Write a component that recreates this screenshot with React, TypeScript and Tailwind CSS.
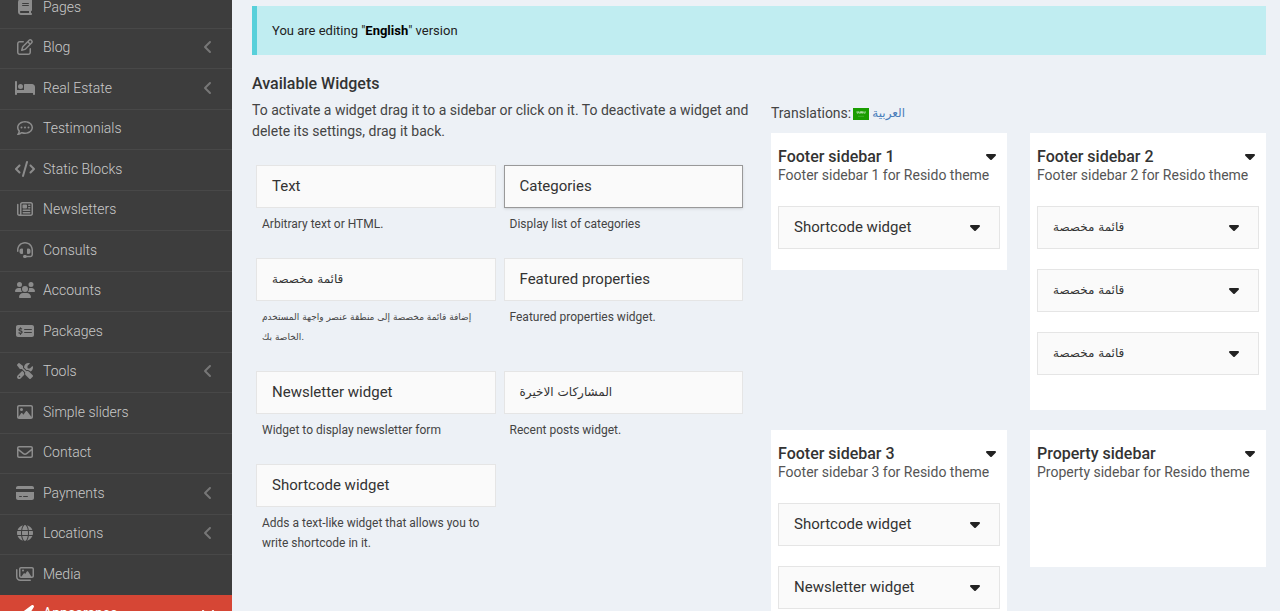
import type { IconType } from "react-icons";
import {
  FaAngleDown,
  FaAngleLeft,
  FaBed,
  FaBook,
  FaCaretDown,
  FaCode,
  FaCreditCard,
  FaGlobe,
  FaHeadset,
  FaMoneyCheckDollar,
  FaPaintbrush,
  FaRegCommentDots,
  FaRegEnvelope,
  FaRegImage,
  FaRegImages,
  FaRegNewspaper,
  FaRegPenToSquare,
  FaScrewdriverWrench,
  FaUsers,
} from "react-icons/fa6";

type NavEntry = { label: string; icon: IconType; expandable?: boolean; active?: boolean };

const navEntries: NavEntry[] = [
  { label: "Pages", icon: FaBook },
  { label: "Blog", icon: FaRegPenToSquare, expandable: true },
  { label: "Real Estate", icon: FaBed, expandable: true },
  { label: "Testimonials", icon: FaRegCommentDots },
  { label: "Static Blocks", icon: FaCode },
  { label: "Newsletters", icon: FaRegNewspaper },
  { label: "Consults", icon: FaHeadset },
  { label: "Accounts", icon: FaUsers },
  { label: "Packages", icon: FaMoneyCheckDollar },
  { label: "Tools", icon: FaScrewdriverWrench, expandable: true },
  { label: "Simple sliders", icon: FaRegImage },
  { label: "Contact", icon: FaRegEnvelope },
  { label: "Payments", icon: FaCreditCard, expandable: true },
  { label: "Locations", icon: FaGlobe, expandable: true },
  { label: "Media", icon: FaRegImages },
  { label: "Appearance", icon: FaPaintbrush, expandable: true, active: true },
];

const availableWidgets = [
  { title: "Text", description: "Arbitrary text or HTML." },
  { title: "Categories", description: "Display list of categories", highlighted: true },
  { title: "قائمة مخصصة", description: "إضافة قائمة مخصصة إلى منطقة عنصر واجهة المستخدم الخاصة بك.", arabic: true, arabicDescription: true },
  { title: "Featured properties", description: "Featured properties widget." },
  { title: "Newsletter widget", description: "Widget to display newsletter form" },
  { title: "المشاركات الاخيرة", description: "Recent posts widget.", arabic: true },
  { title: "Shortcode widget", description: "Adds a text-like widget that allows you to write shortcode in it." },
];

type Area = { title: string; widgets: { title: string; arabic?: boolean }[]; roomy?: boolean };

const menuWidget = { title: "قائمة مخصصة", arabic: true };

const areas: Area[] = [
  { title: "Footer sidebar 1", widgets: [{ title: "Shortcode widget" }] },
  { title: "Footer sidebar 2", widgets: [menuWidget, menuWidget, menuWidget], roomy: true },
  { title: "Footer sidebar 3", widgets: [{ title: "Shortcode widget" }, { title: "Newsletter widget" }] },
  { title: "Property sidebar", widgets: [] },
];

function NavItem({ label, icon: Icon, expandable, active }: NavEntry) {
  return (
    <li className="odd:h-[41px] even:h-10">
      <a
        href="#"
        className={
          active
            ? "flex h-full items-center border-t border-[#d64635] bg-[#d64635] pr-4 pb-[5px] pl-[14px] text-white"
            : "flex h-full items-center border-t border-[#484848] pr-[19px] pb-[3px] pl-[14px] text-[#c9c9c9]"
        }
      >
        <span className={active ? "flex w-[22px] justify-center" : "flex w-[22px] justify-center text-[#8c8c8c]"}>
          <Icon className="h-4 w-5" />
        </span>
        <span className={active ? "ml-[7px] grow text-sm leading-5" : "ml-[7px] grow text-sm leading-5 font-light"}>{label}</span>
        {expandable &&
          (active ? <FaAngleDown className="h-4 w-4" /> : <FaAngleLeft className="h-4 w-[10px] text-[#777777]" />)}
      </a>
    </li>
  );
}

function ToggleButton({ label }: { label: string }) {
  return (
    <button type="button" aria-label={`Toggle ${label}`} className="pb-0.5 text-[#222222]">
      <FaCaretDown className="h-4 w-[10px]" />
    </button>
  );
}

function WidgetTitle({ title, arabic }: { title: string; arabic?: boolean }) {
  return (
    <h4
      className={
        arabic
          ? "grow pb-0.5 font-['DejaVu_Sans',sans-serif] text-xs leading-5 text-[#333333]"
          : "grow pb-px text-[15px] leading-5 text-[#333333]"
      }
    >
      {title}
    </h4>
  );
}

function AreaPanel({ title, widgets, roomy }: Area) {
  return (
    <section className={roomy ? "min-h-[137px] bg-white px-[7px] pt-[15px] pb-[35px]" : "min-h-[137px] bg-white px-[7px] pt-[15px] pb-5"}>
      <header>
        <div className="flex items-center pr-1">
          <h3 className="grow text-base leading-[18px] font-medium text-[#333333]">{title}</h3>
          <ToggleButton label={title} />
        </div>
        <p className="text-sm leading-[18px] text-[#555555]">{title} for Resido theme</p>
      </header>
      <ul className="mt-[22px] flex flex-col gap-5">
        {widgets.map((widget, index) => (
          <li key={index} className="flex h-[43px] items-center border border-[#e5e5e5] bg-[#fafafa] pr-[19px] pl-[15px]">
            <WidgetTitle {...widget} />
            <ToggleButton label={widget.title} />
          </li>
        ))}
      </ul>
    </section>
  );
}

function SaudiFlag() {
  return (
    <svg viewBox="0 0 16 12" className="h-3 w-4" aria-hidden="true">
      <rect width="16" height="12" fill="#199d00" />
      <path d="M4 3.2v2h1.2v-2M6 5.2h1.7V3.2M8.6 3.2v2h1.2v-2M10.6 5.2h1.6v-2M4.6 4.2h7" stroke="#d5efd0" strokeWidth=".6" fill="none" />
      <path d="M5 8.3h6" stroke="#5cb84c" strokeWidth=".6" />
    </svg>
  );
}

export default function App() {
  return (
    <div className="flex h-screen overflow-hidden bg-[#edf1f6] font-['Roboto','DejaVu_Sans',sans-serif] text-[#333333]">
      <aside className="w-[232px] shrink-0 bg-[#3d3d3d]">
        <nav>
          <ul className="-mt-[13px]">
            {navEntries.map((entry) => (
              <NavItem key={entry.label} {...entry} />
            ))}
          </ul>
        </nav>
      </aside>
      <main className="grow pt-1.5 pr-3.5 pl-5">
        <div role="status" className="border-l-[5px] border-[#58d0da] bg-[#c0edf1] p-[15px] text-[13px] leading-[19px] text-[#222222]">
          You are editing "<strong className="font-bold text-black">English</strong>" version
        </div>
        <div className="mt-[19px] grid grid-cols-2 gap-6">
          <section>
            <h2 className="text-base leading-5 font-medium">Available Widgets</h2>
            <p className="-mr-3 mt-1.5 text-sm leading-[21px] text-[#444444]">
              To activate a widget drag it to a sidebar or click on it. To deactivate a widget and delete its settings, drag it back.
            </p>
            <ul className="mt-[23px] grid grid-cols-2 gap-x-2 gap-y-6 px-1">
              {availableWidgets.map((widget) => (
                <li key={widget.title}>
                  <div
                    className={
                      widget.highlighted
                        ? "flex h-[43px] items-center border border-[#999999] bg-[#fafafa] px-[15px] shadow-sm"
                        : "flex h-[43px] items-center border border-[#e5e5e5] bg-[#fafafa] px-[15px]"
                    }
                  >
                    <WidgetTitle title={widget.title} arabic={widget.arabic} />
                  </div>
                  <p
                    className={
                      widget.arabicDescription
                        ? "px-1.5 pt-1.5 font-['DejaVu_Sans',sans-serif] text-[9px] leading-5 text-[#444444]"
                        : "px-1.5 pt-1.5 text-xs leading-5 text-[#444444]"
                    }
                  >
                    {widget.description}
                  </p>
                </li>
              ))}
            </ul>
          </section>
          <section>
            <p className="mt-[29px] mb-[9px] flex items-center text-sm leading-[21px] text-[#444444]">
              Translations:
              <a href="#" className="ml-[2px] flex items-center gap-[3px] font-['DejaVu_Sans',sans-serif] text-xs leading-[21px] text-[#4a7ebb]">
                <SaudiFlag />
                العربية
              </a>
            </p>
            <div className="grid grid-cols-2 items-start gap-x-[23px] gap-y-5">
              {areas.map((area) => (
                <AreaPanel key={area.title} {...area} />
              ))}
            </div>
          </section>
        </div>
      </main>
    </div>
  );
}
